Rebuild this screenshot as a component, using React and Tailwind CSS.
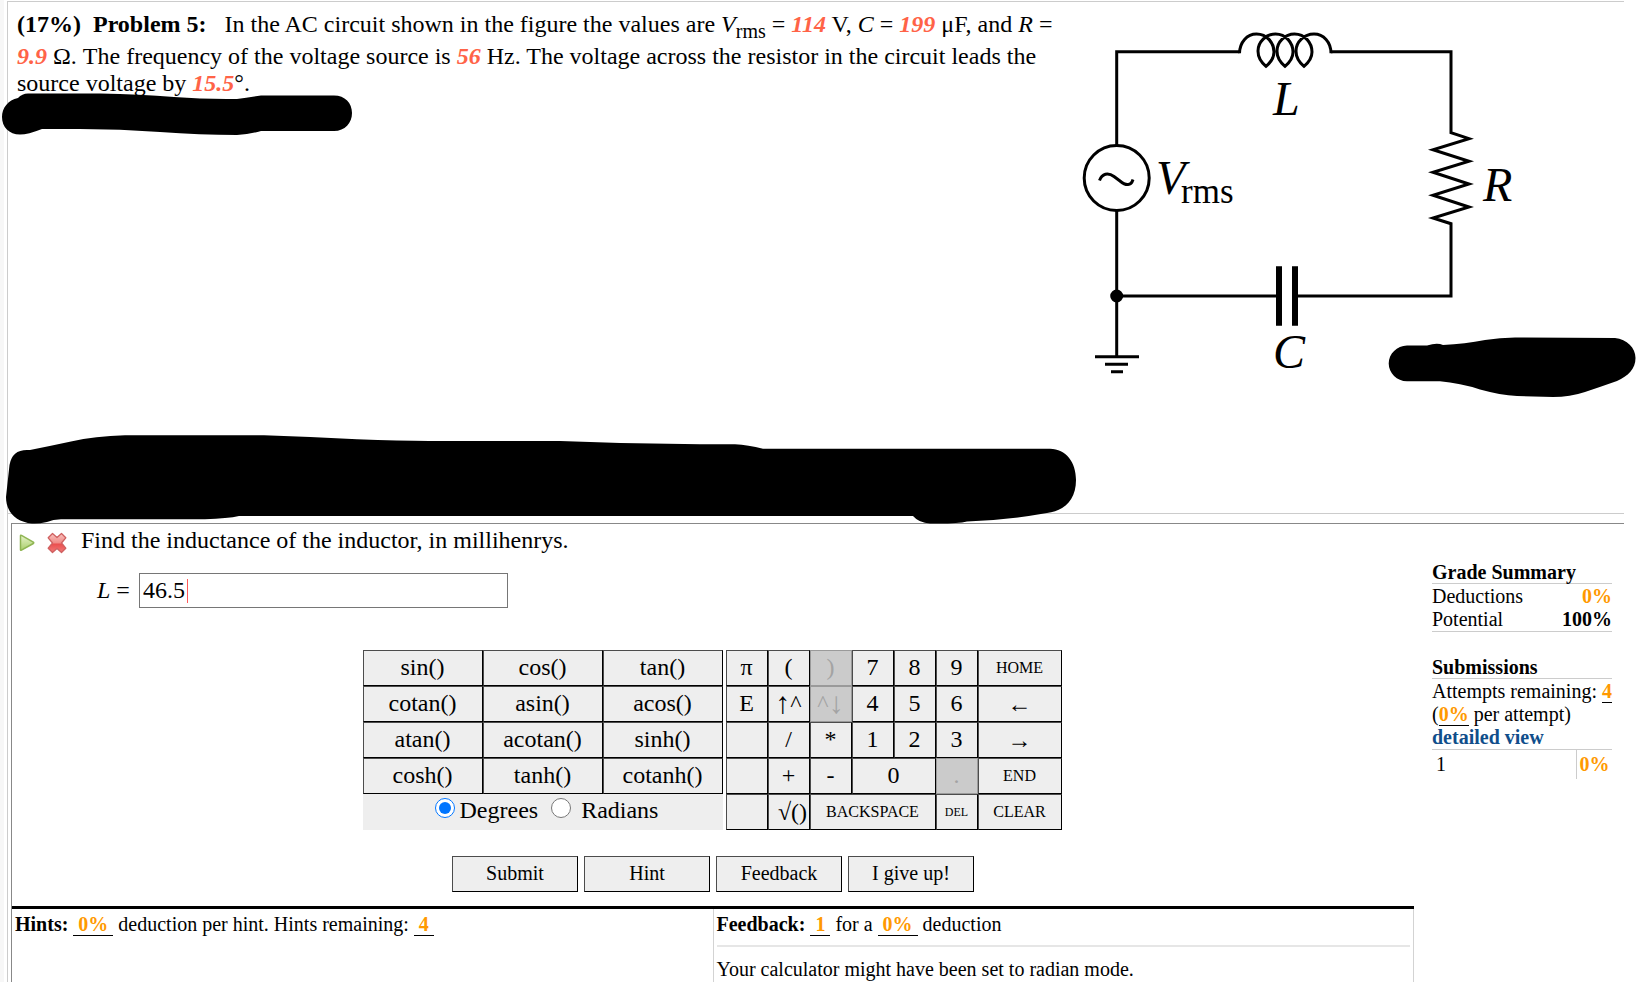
import React, { useState } from "react";

const FUNCTION_KEYS = [
  ["sin()", "cos()", "tan()"],
  ["cotan()", "asin()", "acos()"],
  ["atan()", "acotan()", "sinh()"],
  ["cosh()", "tanh()", "cotanh()"],
];

const TALL_ARROW = "text-3xl leading-none";

const PAD_KEYS = [
  { t: "π" }, { t: "(" }, { t: ")", off: true }, { t: "7" }, { t: "8" }, { t: "9" },
  { t: "HOME", c: "col-span-2 text-base" },
  { t: "E" },
  { t: <><span className={TALL_ARROW}>↑</span>^</> },
  { t: <>^<span className={TALL_ARROW}>↓</span></>, off: true },
  { t: "4" }, { t: "5" }, { t: "6" },
  { t: "←", c: "col-span-2 text-2xl" },
  { t: "", label: "blank 1" }, { t: "/" }, { t: "*" }, { t: "1" }, { t: "2" }, { t: "3" },
  { t: "→", c: "col-span-2 text-2xl" },
  { t: "", label: "blank 2" }, { t: "+" }, { t: "-" }, { t: "0", c: "col-span-2 pb-0.5 text-2xl" },
  { t: ".", off: true },
  { t: "END", c: "col-span-2 text-base" },
  { t: "", label: "blank 3" }, { t: "√()", c: "text-2xl pl-2" },
  { t: "BACKSPACE", c: "col-span-3 text-base" },
  { t: "DEL", c: "text-xs" },
  { t: "CLEAR", c: "col-span-2 text-base" },
];

const KEY =
  "flex h-9 items-center justify-center whitespace-nowrap border border-t-[#4c4c4c] border-l-[#4c4c4c] border-r-black border-b-black bg-[#eeeeee] leading-none text-black";
const KEY_OFF =
  "flex h-9 items-center justify-center whitespace-nowrap border border-[#9a9a9a] bg-[#cbcbcb] pb-0.5 text-2xl leading-none text-[#a3a3a3]";

function Value({ children }) {
  return <b className="italic text-[#ff6347]">{children}</b>;
}

function Amount({ children, wide }) {
  return (
    <b
      className={
        wide
          ? "border-b border-black px-[5px] text-[#ff9900]"
          : "border-b border-black text-[#ff9900]"
      }
    >
      {children}
    </b>
  );
}

function Circuit() {
  return (
    <svg
      viewBox="1077 10 440 380"
      className="h-[380px] w-[440px] shrink-0"
      role="img"
      aria-label="AC circuit"
      fill="none"
      stroke="#000"
      strokeWidth="3"
    >
      <path d="M1116.7 145V51.7H1239.5" />
      <path d="M1239.5 53.2C1239.8 42 1247 34 1256.5 34C1267 34 1274 43 1274 52C1274 58 1270 63 1266 66.3C1262 63 1258 58 1258 51C1258 42 1266 34 1275.5 34C1286 34 1293 43 1293 52C1293 58 1289 63 1285 66.3C1281 63 1277 58 1277 51C1277 42 1285 34 1294.5 34C1305 34 1312 43 1312 52C1312 58 1308 63 1304 66.3C1300 63 1296 58 1296 51C1296 42 1304 34 1314 34C1323.5 34 1331 42 1331 53.2" />
      <path d="M1331 51.7H1451V132.7L1469 138.7L1433 149.7L1469 161.3L1433 172.3L1469 184L1433 195.3L1469 207L1433 218L1451 223.7V296H1295" />
      <circle cx="1116.7" cy="178" r="32.5" />
      <path d="M1099.5 180.5C1102 173.500 1108 172 1114 176.500L1120 181C1126 186 1131 186 1133 179.500" />
      <path d="M1116.700 211V356M1116.700 296H1279" />
      <circle cx="1116.700" cy="296" r="5" fill="#000" />
      <path d="M1095 356.700H1139M1105 364.300H1128M1111 371.700H1123" />
      <path d="M1279 266.300V325.700M1295 266.300V325.700" strokeWidth="6" />
      <g fill="#000" stroke="none" fontSize="48" fontStyle="italic">
        <text x="1273" y="115">L</text>
        <text x="1156" y="194">V</text>
        <text x="1181" y="203" fontSize="35" fontStyle="normal">rms</text>
        <text x="1483" y="201">R</text>
        <text x="1273" y="368">C</text>
      </g>
    </svg>
  );
}

function Marks() {
  return (
    <svg
      viewBox="0 0 1638 530"
      className="pointer-events-none absolute left-0 top-0 h-[530px] w-[1638px] max-w-none"
      aria-hidden="true"
    >
      <path d="M18 98Q22 93.500 28 93.500H100Q140 94 174 97Q205 99.500 237 99Q248 97.500 261 95.500H334C345 95.500 352 103 352 113S345 131 334 131H261Q250 134 237 135Q200 135 160 132Q120 129 80 129H42Q28 134.500 20 134.500C9 134.500 2 127 2 117C2 108 8 100 18 98Z" />
      <path d="M30 450Q50 446 71 441.500Q95 436 125 435.300H264Q310 437 357 439.300Q400 441 429 441H560Q630 444 700 444.300H735Q748 445 763 448.700H1050C1066 449 1076 462 1076 480C1076 500 1064 511 1047 513Q1008 520 967 521.500Q957 524 930 523.500Q919 523 913 516H239Q228 518.500 205 519.300H61Q53 519.500 47 522Q38 524 32 523.500C16 522 6 512 6 497L9.500 465Q12 450 27 450Z" />
      <path d="M1407 345.600H1427Q1437 342 1443 345Q1465 344 1485 340Q1500 337.500 1515 337.500L1615 338C1627 339 1635.500 348 1635.500 358C1635.500 369 1628 376 1617 381Q1600 387 1585 392Q1570 397 1553 397L1517 396Q1500 395 1480 389.500Q1460 383 1440 381.300H1407C1397 381.300 1388.700 373 1388.700 363.500S1397 345.600 1407 345.600Z" />
    </svg>
  );
}

function Problem() {
  return (
    <section className="flex h-[512px] items-start border-b border-[#cccccc]">
      <p className="min-w-0 flex-1 pl-[9px] pt-[9px] text-2xl leading-[27px]">
        <b>(17%)&nbsp; Problem 5:</b>&nbsp;&nbsp; In the AC circuit shown in the figure the values are{" "}
        <i>V</i>
        <sub className="bottom-auto align-sub text-xl leading-[23px]">rms</sub> = <Value>114</Value> V,{" "}
        <i>C</i> = <Value>199</Value> μF, and <i>R</i> =<br />
        <Value>9.9</Value> Ω. The frequency of the voltage source is <Value>56</Value> Hz. The voltage
        across the resistor in the circuit leads the
        <br />
        source voltage by <Value>15.5</Value>°.
      </p>
      <div className="w-[547px] shrink-0 pt-2">
        <Circuit />
      </div>
    </section>
  );
}

function Keypad() {
  const [mode, setMode] = useState("degrees");
  return (
    <div className="flex justify-center gap-[3px] pr-0.5">
      <div className="w-[360px] bg-[#eeeeee]">
        <div className="grid grid-cols-3">
          {FUNCTION_KEYS.flat().map((name) => (
            <button type="button" key={name} className={KEY + " pb-0.5 text-2xl"}>
              {name}
            </button>
          ))}
        </div>
        <div className="flex h-9 items-center justify-center gap-[13px] pb-1 pl-2 text-2xl leading-7">
          <label className="flex items-center gap-[5px]">
            <input
              type="radio"
              name="angle"
              className="mb-1 size-5"
              checked={mode === "degrees"}
              onChange={() => setMode("degrees")}
            />
            Degrees
          </label>
          <label className="flex items-center gap-2.5">
            <input
              type="radio"
              name="angle"
              className="mb-1 size-5"
              checked={mode === "radians"}
              onChange={() => setMode("radians")}
            />
            Radians
          </label>
        </div>
      </div>
      <div className="grid w-[336px] grid-cols-8">
        {PAD_KEYS.map((k, i) => (
          <button
            type="button"
            key={i}
            disabled={k.off}
            aria-label={k.label}
            className={k.off ? KEY_OFF : KEY + " " + (k.c || "pb-0.5 text-2xl")}
          >
            {k.t}
          </button>
        ))}
      </div>
    </div>
  );
}

function Summary() {
  return (
    <aside className="w-[210px] shrink-0 pl-[18px] pr-3 pt-9 text-xl leading-[23px]">
      <h2 className="h-6 border-b border-[#cccccc] font-bold leading-[25px]">Grade Summary</h2>
      <div className="flex justify-between pt-px">
        <span>Deductions</span>
        <b className="text-[#ff9900]">0%</b>
      </div>
      <div className="flex justify-between border-b border-[#cccccc]">
        <span>Potential</span>
        <b>100%</b>
      </div>
      <h2 className="mt-[23px] h-6 border-b border-[#cccccc] font-bold leading-[25px]">Submissions</h2>
      <div className="whitespace-nowrap pt-px">
        Attempts remaining: <Amount>4</Amount>
      </div>
      <div>
        (<Amount>0%</Amount> per attempt)
      </div>
      <a href="#detail" className="block font-bold text-[#104e8b]">
        detailed view
      </a>
      <table className="w-full border-t border-[#cccccc]">
        <tbody>
          <tr>
            <td className="py-[3px] pl-1">1</td>
            <td className="w-9 border-l border-[#cccccc] py-[3px] pl-[3px] font-bold text-[#ff9900]">0%</td>
          </tr>
        </tbody>
      </table>
    </aside>
  );
}

function Question() {
  const [answer, setAnswer] = useState("46.5");
  return (
    <section className="ml-[3px] mt-[9px] flex flex-1 border-l border-t border-[#888888]">
      <div className="flex min-w-0 flex-1 flex-col">
        <div className="flex items-center pl-[7px] pt-[3px] text-2xl leading-[27px]">
          <svg viewBox="0 0 16 18" className="mr-3 mt-1 h-[18px] w-4" aria-hidden="true">
            <defs>
              <linearGradient id="go" x1="0" y1="0" x2="0" y2="1">
                <stop offset="0" stopColor="#e6f2c8" />
                <stop offset="1" stopColor="#a9cf6b" />
              </linearGradient>
            </defs>
            <path
              d="M1.500 1.800Q1.500 .9 2.500 1.400L14.300 8.100Q15.200 8.800 14.300 9.500L2.500 16.200Q1.500 16.700 1.500 15.700Z"
              fill="url(#go)"
              stroke="#8fb553"
              strokeWidth="1.500"
            />
          </svg>
          <svg viewBox="0 0 20 22" className="mr-[14px] mt-1 h-[22px] w-5" aria-hidden="true">
            <defs>
              <linearGradient id="no" x1="0" y1="0" x2="0" y2="1">
                <stop offset="0" stopColor="#f9c4c0" />
                <stop offset=".5" stopColor="#f08a86" />
                <stop offset=".55" stopColor="#ea4f4f" />
                <stop offset="1" stopColor="#f27a78" />
              </linearGradient>
            </defs>
            <path
              d="M5.500 1.500L10 5.500L14.500 1.500L18.800 5.800L14.500 11L18.800 16.200L14.500 20.500L10 16.500L5.500 20.500L1.200 16.200L5.500 11L1.200 5.800Z"
              fill="url(#no)"
              stroke="#cf6060"
              strokeWidth="1.300"
              strokeLinejoin="round"
            />
          </svg>
          <p>Find the inductance of the inductor, in millihenrys.</p>
        </div>
        <div className="mt-[19px] flex items-center pl-[85px] text-2xl leading-[27px]">
          <label htmlFor="answer" className="pr-[9px]">
            <i>L</i> =
          </label>
          <span className="relative">
            <input
              id="answer"
              value={answer}
              onChange={(e) => setAnswer(e.target.value)}
              className="block h-[35px] w-[369px] border border-[#767676] bg-white px-[3px] outline-none"
            />
            <span className="absolute left-12 top-1.5 h-6 w-px bg-[#ff5a5a]" />
          </span>
        </div>
        <div className="mt-[42px]">
          <Keypad />
        </div>
        <div className="mt-[26px] flex justify-center gap-1.5">
          {["Submit", "Hint", "Feedback", "I give up!"].map((t) => (
            <button type="button" key={t} className={KEY + " w-[126px] pb-0.5 text-xl"}>
              {t}
            </button>
          ))}
        </div>
        <div className="mt-[14px] flex flex-1 border-t-[3px] border-black text-xl leading-[23px]">
          <div className="flex-1 pl-[3px] pr-1 pt-1">
            <b>Hints: </b>
            <Amount wide>0%</Amount> deduction per hint. Hints remaining: <Amount wide>4</Amount>
          </div>
          <div className="flex-1 border-x border-[#d3d3d3] px-[3px] pt-1">
            <div>
              <b>Feedback: </b>
              <Amount wide>1</Amount> for a <Amount wide>0%</Amount> deduction
            </div>
            <hr className="mb-[11px] mt-[9px] border-t-2 border-[#e6e6e6]" />
            <p>Your calculator might have been set to radian mode.</p>
          </div>
        </div>
      </div>
      <Summary />
    </section>
  );
}

export default function App() {
  return (
    <div className="relative flex min-h-screen overflow-hidden bg-white font-['Liberation_Serif','Times_New_Roman',serif] text-black">
      <div className="w-1 bg-[#f7f7f7]" />
      <main className="ml-[3px] mr-[14px] mt-px flex min-w-0 flex-1 flex-col border-l border-t border-[#cccccc]">
        <Problem />
        <Question />
      </main>
      <Marks />
    </div>
  );
}
